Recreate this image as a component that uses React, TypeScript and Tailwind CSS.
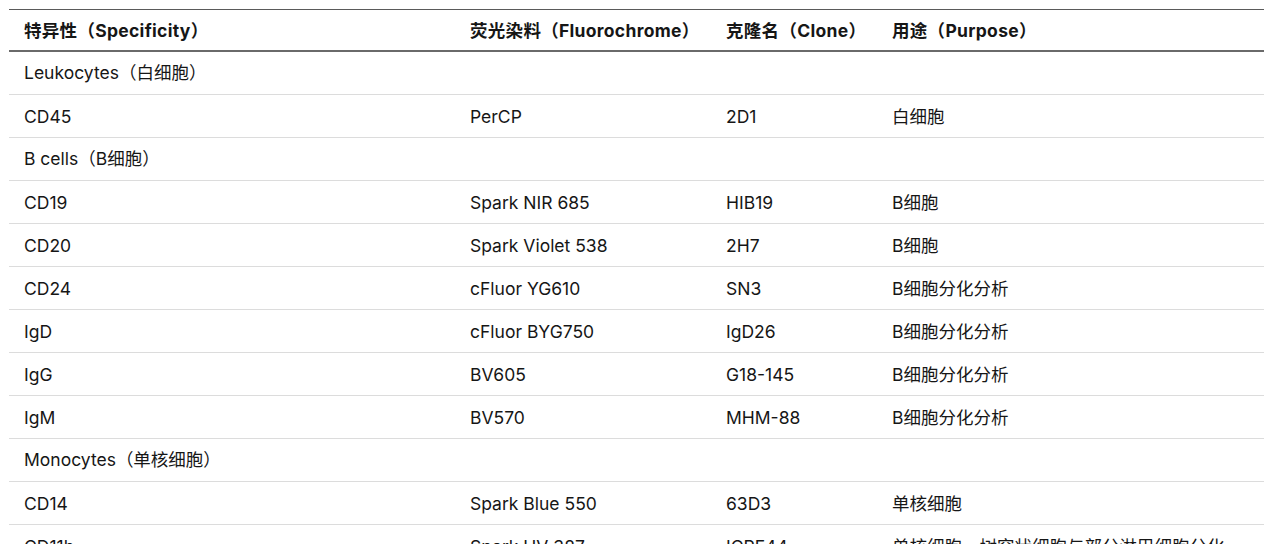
import React from "react";

type Row = { section?: string; cells?: [string, string, string, string] };

const rows: Row[] = [
  { section: "Leukocytes（白细胞）" },
  { cells: ["CD45", "PerCP", "2D1", "白细胞"] },
  { section: "B cells（B细胞）" },
  { cells: ["CD19", "Spark NIR 685", "HIB19", "B细胞"] },
  { cells: ["CD20", "Spark Violet 538", "2H7", "B细胞"] },
  { cells: ["CD24", "cFluor YG610", "SN3", "B细胞分化分析"] },
  { cells: ["IgD", "cFluor BYG750", "IgD26", "B细胞分化分析"] },
  { cells: ["IgG", "BV605", "G18-145", "B细胞分化分析"] },
  { cells: ["IgM", "BV570", "MHM-88", "B细胞分化分析"] },
  { section: "Monocytes（单核细胞）" },
  { cells: ["CD14", "Spark Blue 550", "63D3", "单核细胞"] },
  {
    cells: [
      "CD11b",
      "Spark UV 387",
      "ICRF44",
      "单核细胞、树突状细胞与部分淋巴细胞分化标志",
    ],
  },
];

const grid = "grid grid-cols-[446px_256px_166px_387px]";

export default function App() {
  return (
    <div
      className="w-[1280px] h-[544px] overflow-hidden bg-white text-[#161616] text-[17.5px] antialiased"
      style={{ fontFamily: 'Inter, "Noto Sans CJK SC", sans-serif' }}
    >
      <div className="ml-[9px] pt-[9px] w-[1255px]">
        <div className={`${grid} h-[43px] pt-[2px] border-t border-b-2 border-t-[#5a5a5a] border-b-[#6a6a6a] font-bold tracking-[0.3px] items-center`}>
          <div className="px-[15px]">特异性（Specificity）</div>
          <div className="px-[15px]">荧光染料（Fluorochrome）</div>
          <div className="px-[15px]">克隆名（Clone）</div>
          <div className="px-[15px]">用途（Purpose）</div>
        </div>
        {rows.map((r, i) =>
          r.section ? (
            <div
              key={i}
              className="h-[43px] border-b border-[#dcdcdc] flex items-center px-[15px]"
            >
              {r.section}
            </div>
          ) : (
            <div
              key={i}
              className={`${grid} min-h-[43px] border-b border-[#dcdcdc]`}
            >
              {r.cells!.map((c, j) => (
                <div key={j} className="px-[15px] pt-[10px] pb-[9px] leading-[23px]">
                  {j === 3 ? <span className="block max-w-[340px]">{c}</span> : c}
                </div>
              ))}
            </div>
          )
        )}
      </div>
    </div>
  );
}
